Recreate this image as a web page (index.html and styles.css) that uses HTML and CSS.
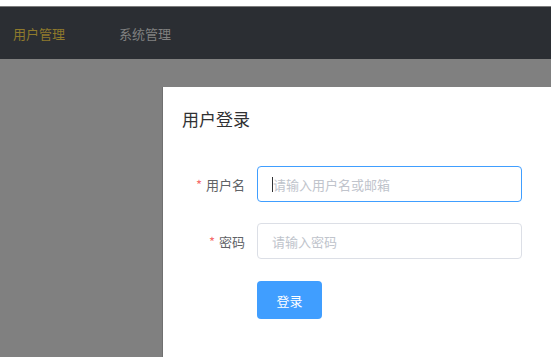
FILE: index.html
```html
<!DOCTYPE html>
<html lang="zh-CN">
<head>
<meta charset="utf-8">
<title>用户登录</title>
<link rel="stylesheet" href="styles.css">
</head>
<body>
<div class="frame">
  <nav class="menu">
    <span class="menu-item active">用户管理</span>
    <span class="menu-item">系统管理</span>
  </nav>
  <div class="dialog">
    <h2 class="dialog-title">用户登录</h2>
    <form class="form">
      <div class="form-row">
        <label class="form-label"><span class="star">*</span>用户名</label>
        <div class="input focused"><span class="caret"></span><span class="ph">请输入用户名或邮箱</span></div>
      </div>
      <div class="form-row">
        <label class="form-label"><span class="star">*</span>密码</label>
        <div class="input"><span class="ph">请输入密码</span></div>
      </div>
      <div class="form-row actions">
        <span class="btn">登录</span>
      </div>
    </form>
  </div>
</div>
</body>
</html>
```
FILE: styles.css
```css
html, body {
  margin: 0;
  padding: 0;
  background: #ffffff;
  overflow: hidden;
  font-family: "Noto Sans CJK SC", "Noto Sans", sans-serif;
}
.frame {
  position: relative;
  margin-top: 6px;
  height: 350px;
  border-top: 1px solid #7c7c7c;
  background: #808080;
}
.menu {
  display: flex;
  align-items: center;
  height: 52px;
  background: #2b2e33;
  padding-left: 13px;
  gap: 54px;
}
.menu-item {
  font-size: 13px;
  color: #808080;
}
.menu-item.active {
  color: #8f7a2c;
}
.dialog {
  position: absolute;
  left: 163px;
  top: 80px;
  width: 388px;
  height: 275px;
  background: #ffffff;
  box-shadow: -1px 0 0 rgba(0, 0, 0, 0.12);
  padding: 20px 0 0 19px;
  box-sizing: border-box;
}
.dialog-title {
  margin: 0;
  font-size: 17px;
  font-weight: normal;
  line-height: 24px;
  color: #303133;
}
.form {
  margin-top: 35px;
  display: flex;
  flex-direction: column;
  gap: 21px;
}
.form-row {
  display: flex;
  align-items: center;
}
.form-label {
  width: 63px;
  padding-right: 12px;
  text-align: right;
  font-size: 13px;
  color: #606266;
  box-sizing: content-box;
}
.star {
  color: #f56c6c;
  margin-right: 4px;
}
.input {
  width: 265px;
  height: 36px;
  box-sizing: border-box;
  border: 1px solid #dcdfe6;
  border-radius: 4px;
  display: flex;
  align-items: center;
  padding-left: 14px;
}
.input.focused {
  border-color: #409eff;
}
.caret {
  width: 1px;
  height: 15px;
  background: #303133;
}
.ph {
  font-size: 13px;
  color: #c0c4cc;
}
.actions {
  padding-left: 75px;
  margin-top: 1px;
}
.btn {
  display: flex;
  align-items: center;
  justify-content: center;
  width: 65px;
  height: 38px;
  border-radius: 4px;
  background: #409eff;
  color: #ffffff;
  font-size: 13px;
}
```
